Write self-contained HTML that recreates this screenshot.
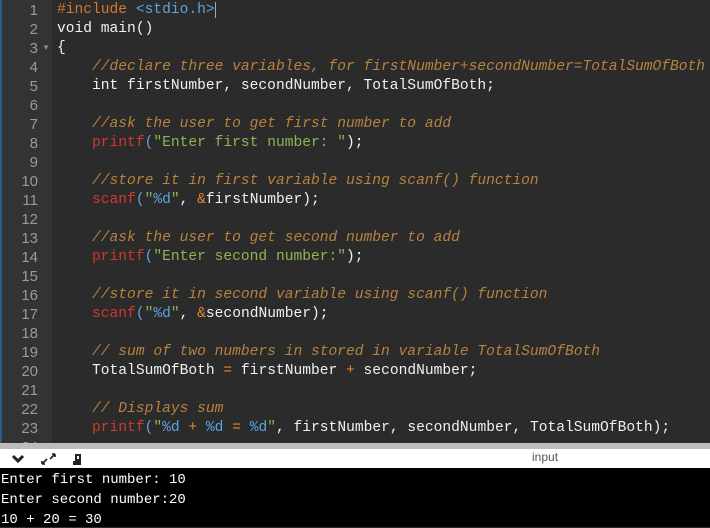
<!DOCTYPE html>
<html><head><meta charset="utf-8"><style>
html,body{margin:0;padding:0;width:710px;height:527px;overflow:hidden;background:#2d2d2d}
#ed{position:absolute;left:0;top:0;width:710px;height:443px;background:#2b2b2b;overflow:hidden}
#gut{position:absolute;left:0;top:0;width:52px;height:443px;background:#313335;border-left:2px solid #2a5c8a;box-sizing:border-box}
.ln{position:absolute;left:0;width:38px;text-align:right;color:#9a9a9a;font:15px "Liberation Sans",sans-serif}
.cl{position:absolute;left:57px;white-space:pre;color:#f0f0f0;font:14.6px "Liberation Mono",monospace}
.c{color:#b8823e;font-style:italic}
.p{color:#d0382f}
.s{color:#8fb553}
.b{color:#5fa2e0}
.o{color:#e0892c}
.inc{color:#d8752f}
#bar{position:absolute;left:0;top:443px;width:710px;height:6px;background:#bdbdbd}
#tb{position:absolute;left:0;top:449px;width:710px;height:19px;background:#fff}
#con{position:absolute;left:0;top:468px;width:710px;height:59px;background:#000;color:#fff;font:14px "Liberation Mono",monospace}
#con div{position:absolute;left:1px;white-space:pre}
#lines{position:absolute;left:0;top:2px;width:710px;height:460px}
</style></head><body>
<div id="ed">
<div id="gut"></div>
<div id="lines">
<div class="ln" style="top:0">1</div>
<div class="ln" style="top:19px">2</div>
<div class="ln" style="top:38px">3<span style="font-size:8px;color:#888;position:absolute;left:42px;top:3px">▼</span></div>
<div class="ln" style="top:57px">4</div>
<div class="ln" style="top:76px">5</div>
<div class="ln" style="top:95px">6</div>
<div class="ln" style="top:114px">7</div>
<div class="ln" style="top:133px">8</div>
<div class="ln" style="top:152px">9</div>
<div class="ln" style="top:171px">10</div>
<div class="ln" style="top:190px">11</div>
<div class="ln" style="top:209px">12</div>
<div class="ln" style="top:228px">13</div>
<div class="ln" style="top:247px">14</div>
<div class="ln" style="top:266px">15</div>
<div class="ln" style="top:285px">16</div>
<div class="ln" style="top:304px">17</div>
<div class="ln" style="top:323px">18</div>
<div class="ln" style="top:342px">19</div>
<div class="ln" style="top:361px">20</div>
<div class="ln" style="top:380px">21</div>
<div class="ln" style="top:399px">22</div>
<div class="ln" style="top:418px">23</div>
<div class="ln" style="top:437px">24</div>

<div class="cl" style="top:0"><span class="inc">#include</span> <span class="b">&lt;stdio.h&gt;</span><span style="border-left:1px solid #aaa"> </span></div>
<div class="cl" style="top:19px">void main()</div>
<div class="cl" style="top:38px">{</div>
<div class="cl" style="top:57px">    <span class="c">//declare three variables, for firstNumber+secondNumber=TotalSumOfBoth</span></div>
<div class="cl" style="top:76px">    int firstNumber, secondNumber, TotalSumOfBoth;</div>
<div class="cl" style="top:114px">    <span class="c">//ask the user to get first number to add</span></div>
<div class="cl" style="top:133px">    <span class="p">printf</span><span class="b">(</span><span class="s">"Enter first number: "</span>);</div>
<div class="cl" style="top:171px">    <span class="c">//store it in first variable using scanf() function</span></div>
<div class="cl" style="top:190px">    <span class="p">scanf</span><span class="b">(</span><span class="s">"</span><span class="b">%d</span><span class="s">"</span>, <span class="o">&amp;</span>firstNumber);</div>
<div class="cl" style="top:228px">    <span class="c">//ask the user to get second number to add</span></div>
<div class="cl" style="top:247px">    <span class="p">printf</span><span class="b">(</span><span class="s">"Enter second number:"</span>);</div>
<div class="cl" style="top:285px">    <span class="c">//store it in second variable using scanf() function</span></div>
<div class="cl" style="top:304px">    <span class="p">scanf</span><span class="b">(</span><span class="s">"</span><span class="b">%d</span><span class="s">"</span>, <span class="o">&amp;</span>secondNumber);</div>
<div class="cl" style="top:342px">    <span class="c">// sum of two numbers in stored in variable TotalSumOfBoth</span></div>
<div class="cl" style="top:361px">    TotalSumOfBoth <span class="o">=</span> firstNumber <span class="o">+</span> secondNumber;</div>
<div class="cl" style="top:399px">    <span class="c">// Displays sum</span></div>
<div class="cl" style="top:418px">    <span class="p">printf</span><span class="b">(</span><span class="s">"</span><span class="b">%d</span> <span class="o">+</span> <span class="b">%d</span> <span class="o">=</span> <span class="b">%d</span><span class="s">"</span>, firstNumber, secondNumber, TotalSumOfBoth);</div>
</div>
</div>
<div id="bar"></div>
<div id="tb">
<svg width="100" height="19" style="position:absolute;left:0;top:0">
<path d="M13 7 L18 12 L23 7" stroke="#222" stroke-width="3" fill="none"/>
<path d="M42 15 L47 10 M42 15 v-3 M42 15 h3 M55 5 L50 10 M55 5 v3 M55 5 h-3" stroke="#222" stroke-width="1.6" fill="none"/>
<path d="M75 5 h6 v11 h-8 v-4 h2 z" fill="#222"/><rect x="77" y="7" width="2" height="3" fill="#fff"/>
</svg>
<span style="position:absolute;left:532px;top:1px;font:12px 'Liberation Sans',sans-serif;color:#555">input</span>
</div>
<div id="con">
<div style="top:4px">Enter first number: 10</div>
<div style="top:24px">Enter second number:20</div>
<div style="top:44px">10 + 20 = 30</div>
</div>
</body></html>
